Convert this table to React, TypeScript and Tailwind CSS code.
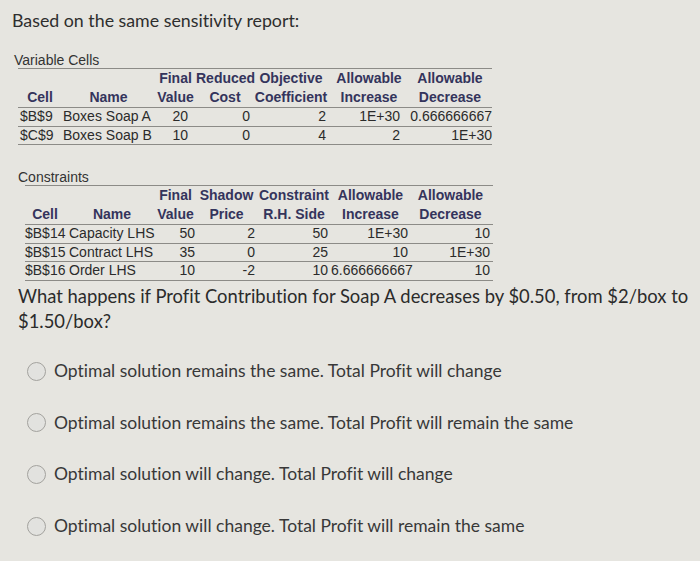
import React from 'react';

const sans = { fontFamily: '"Liberation Sans", Arial, sans-serif' };
const lato = { fontFamily: 'Lato, "Open Sans", sans-serif' };

type Col = { w: number; head: [string, string]; headCls?: string; bodyCls: string };

function SensitivityTable({ cols, rows, className }: { cols: Col[]; rows: string[][]; className: string }) {
  return (
    <table className={`table-fixed border-collapse border-t border-[#8c8b87] text-[14px] leading-[17px] ${className}`} style={sans}>
      <colgroup>
        {cols.map((c, i) => (
          <col key={i} style={{ width: c.w }} />
        ))}
      </colgroup>
      <thead className="font-bold text-[#34345c]">
        <tr className="h-[20px]">
          {cols.map((c, i) => (
            <th key={i} className={`p-0 font-bold whitespace-nowrap ${c.headCls ?? 'text-center'}`}>
              {c.head[0]}
            </th>
          ))}
        </tr>
        <tr className="h-[19px] border-b border-[#8c8b87]">
          {cols.map((c, i) => (
            <th key={i} className={`p-0 font-bold whitespace-nowrap ${c.headCls ?? 'text-center'}`}>
              {c.head[1]}
            </th>
          ))}
        </tr>
      </thead>
      <tbody className="text-[#2b2b2b]">
        {rows.map((r, ri) => (
          <tr key={ri} className="h-[18.5px] border-b border-[#8c8b87]">
            {r.map((v, ci) => (
              <td key={ci} className={`p-0 whitespace-nowrap ${cols[ci].bodyCls}`}>
                {v}
              </td>
            ))}
          </tr>
        ))}
      </tbody>
    </table>
  );
}

const varCols: Col[] = [
  { w: 44, head: ['', 'Cell'], bodyCls: 'text-left pl-[2px]' },
  { w: 93, head: ['', 'Name'], bodyCls: 'text-left pl-[1px]' },
  { w: 41, head: ['Final', 'Value'], bodyCls: 'text-right pr-[8px]' },
  { w: 58, head: ['Reduced', 'Cost'], bodyCls: 'text-right pr-[4px]' },
  { w: 74, head: ['Objective', 'Coefficient'], bodyCls: 'text-right pr-[2px]' },
  { w: 76, head: ['Allowable', 'Increase'], headCls: 'text-center pl-[6px]', bodyCls: 'text-right pr-[4px]' },
  { w: 88, head: ['Allowable', 'Decrease'], headCls: 'text-center pl-[4px]', bodyCls: 'text-right pr-0' },
];

const conCols: Col[] = [
  { w: 44, head: ['', 'Cell'], headCls: 'text-center pr-[4px]', bodyCls: 'text-left pl-0' },
  { w: 86, head: ['', 'Name'], bodyCls: 'text-left pl-0' },
  { w: 41, head: ['Final', 'Value'], bodyCls: 'text-right pr-[1px]' },
  { w: 61, head: ['Shadow', 'Price'], bodyCls: 'text-right pr-[2px]' },
  { w: 74, head: ['Constraint', 'R.H. Side'], bodyCls: 'text-right pr-[3px]' },
  { w: 79, head: ['Allowable', 'Increase'], headCls: 'text-center', bodyCls: 'text-right pr-[2px]' },
  { w: 83, head: ['Allowable', 'Decrease'], headCls: 'text-center pr-[2px]', bodyCls: 'text-right pr-[3px]' },
];

const options = [
  'Optimal solution remains the same. Total Profit will change',
  'Optimal solution remains the same. Total Profit will remain the same',
  'Optimal solution will change. Total Profit will change',
  'Optimal solution will change. Total Profit will remain the same',
];

export default function App() {
  return (
    <div className="w-[700px] h-[561px] overflow-hidden bg-[#e6e5e0] flex flex-col [font-variant-ligatures:none]">
      <h1 className="mt-[8px] ml-[12px] text-[17.8px] leading-[24px] text-[#2e2e2e]" style={lato}>
        Based on the same sensitivity report:
      </h1>

      <p className="mt-[20px] ml-[14px] text-[14px] leading-[16px] text-[#333]" style={sans}>
        Variable Cells
      </p>
      <SensitivityTable
        className="ml-[18px] w-[474px]"
        cols={varCols}
        rows={[
          ['$B$9', 'Boxes Soap A', '20', '0', '2', '1E+30', '0.666666667'],
          ['$C$9', 'Boxes Soap B', '10', '0', '4', '2', '1E+30'],
        ]}
      />

      <p className="mt-[24px] ml-[18px] text-[14px] leading-[16px] text-[#333]" style={sans}>
        Constraints
      </p>
      <SensitivityTable
        className="ml-[25px] w-[468px]"
        cols={conCols}
        rows={[
          ['$B$14', 'Capacity LHS', '50', '2', '50', '1E+30', '10'],
          ['$B$15', 'Contract LHS', '35', '0', '25', '10', '1E+30'],
          ['$B$16', 'Order LHS', '10', '-2', '10', '6.666666667', '10'],
        ]}
      />

      <p className="mt-[3px] ml-[18px] text-[18.4px] leading-[25px] text-[#2b2b2b]" style={lato}>
        What happens if Profit Contribution for Soap A decreases by $0.50, from $2/box to $1.50/box?
      </p>

      <div className="mt-[28px] flex flex-col gap-[32.8px]" style={lato}>
        {options.map((o) => (
          <label key={o} className="ml-[27px] flex items-center gap-[8px] h-[19px] text-[17.5px] text-[#383838]">
            <span className="w-[19px] h-[19px] rounded-full border border-[#a3a29e] bg-[#e2e2df] shrink-0" />
            <span>{o}</span>
          </label>
        ))}
      </div>
    </div>
  );
}
